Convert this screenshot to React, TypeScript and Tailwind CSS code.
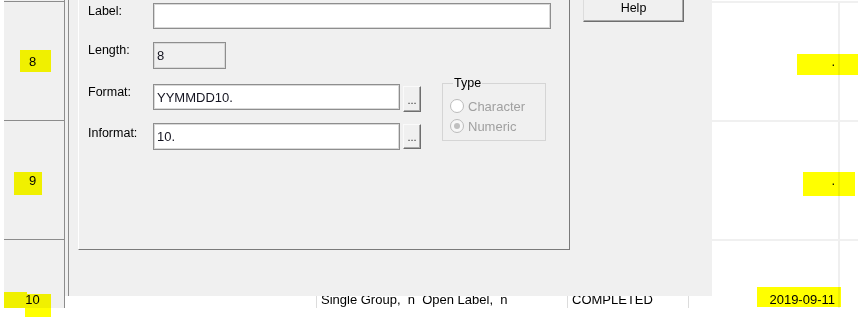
import React from "react";

function Field({ w, h, value, grey }: { w: string; h: string; value?: string; grey?: boolean }) {
  return (
    <div className={`${w} ${h} border border-[#8e8e8e]`}>
      <div
        className={`h-full border border-[#d9d9d9] ${grey ? "bg-[#f0f0f0]" : "bg-white"} flex items-center pl-[2px] text-[13px] leading-[15px] text-[#141420]`}
      >
        {value}
      </div>
    </div>
  );
}

function DotsButton({ extra }: { extra: string }) {
  return (
    <div
      className={`ml-[3px] w-[18px] ${extra} border-l border-t border-l-[#fafafa] border-t-[#fafafa] border-r border-b border-r-[#6e6e6e] border-b-[#6e6e6e] shadow-[inset_-1px_-1px_0_#a8a8a8] flex items-center justify-center pt-[2px] text-[11px] leading-none text-[#303030]`}
    >
      ...
    </div>
  );
}

function Row({ num, b, c, d }: { num: string; b?: React.ReactNode; c?: string; d?: string }) {
  return (
    <div className="flex h-[119px] shrink-0">
      <div className="w-[4px] bg-white" />
      <div className="w-[61px] bg-[#f0f0f0] border-t border-r border-[#8c8c8c] flex items-center justify-center pr-[3px] text-[13px] leading-[15px]">
        {num}
      </div>
      <div className="w-[252px] border-t-2 border-t-[#f0f0f0] border-r border-r-[#dcdcdc]" />
      <div className="w-[251px] border-t-2 border-t-[#f0f0f0] border-r border-r-[#dcdcdc] flex items-center pl-[4px] text-[13px] leading-[14px] whitespace-pre">
        {b}
      </div>
      <div className="w-[121px] border-t-2 border-t-[#f0f0f0] border-r border-r-[#dcdcdc] flex items-center pl-[4px] text-[13px] leading-[15px]">
        {c}
      </div>
      <div className="w-[151px] border-t-2 border-t-[#f0f0f0] border-r-2 border-r-[#efefef] flex items-center justify-end pr-[3px] text-[13px] leading-[15px]">
        {d}
      </div>
      <div className="flex-1 border-t-2 border-t-[#f0f0f0]" />
    </div>
  );
}

export default function App() {
  return (
    <div className="relative w-[858px] h-[318px] bg-white overflow-hidden font-['Liberation_Sans',Arial,sans-serif] text-black">
      {/* underlying table */}
      <div className="h-[308px] overflow-hidden flex flex-col">
        <div className="flex h-[1px] shrink-0">
          <div className="w-[4px]" />
          <div className="w-[61px] bg-[#f0f0f0] border-r border-[#8c8c8c]" />
        </div>
        <Row num="8" d="." />
        <Row num="9" d="." />
        <Row
          num="10"
          b={
            <div>
              <div>Allocation: N/A, Intervention</div>
              <div>{"Single Group,  n  Open Label,  n"}</div>
              <div>{"Assignment  (Masking: None (Open Label)"}</div>
            </div>
          }
          c="COMPLETED"
          d="2019-09-11"
        />
      </div>

      {/* dialog window over the table */}
      <div className="absolute left-[65px] top-0 w-[647px] h-[296px] bg-[#f0f0f0] pl-[3px]">
        <div className="h-full border-l border-[#8c8c8c] flex items-start">
          <div className="ml-[9px] w-[492px] h-[250px] border-l border-l-white border-r border-b border-r-[#7a7a7a] border-b-[#7a7a7a] pl-[9px] pt-[3px] flex flex-col text-[12.5px] leading-[15px]">
            <div className="flex h-[26px]">
              <div className="w-[65px] pt-[1px]">Label:</div>
              <Field w="w-[398px]" h="h-[26px]" />
            </div>
            <div className="flex h-[27px] mt-[13px]">
              <div className="w-[65px] pt-[1px]">Length:</div>
              <Field w="w-[73px]" h="h-[27px]" value="8" grey />
            </div>
            <div className="flex mt-[14px]">
              <div className="flex flex-col pt-[1px]">
                <div className="flex">
                  <div className="w-[65px] pt-[1px]">Format:</div>
                  <Field w="w-[247px]" h="h-[26px]" value="YYMMDD10." />
                  <DotsButton extra="mt-[2px] h-[26px]" />
                </div>
                <div className="flex mt-[11px]">
                  <div className="w-[65px] pt-[3px]">Informat:</div>
                  <Field w="w-[247px]" h="h-[27px]" value="10." />
                  <DotsButton extra="mt-[1px] h-[25px]" />
                </div>
              </div>
              <div className="relative ml-[21px] w-[104px] h-[58px] border border-[#d5d5d5] pl-[7px] pt-[12px]">
                <div className="absolute left-[10px] top-[-8px] px-[1px] bg-[#f0f0f0] text-[12.5px] leading-[15px] text-black">
                  Type
                </div>
                <div className="flex items-center h-[20px]">
                  <div className="w-[14px] h-[14px] rounded-full border border-[#bcbcbc] bg-white" />
                  <span className="ml-[4px] text-[13px] leading-[15px] text-[#a0a0a0]">Character</span>
                </div>
                <div className="flex items-center h-[20px]">
                  <div className="w-[14px] h-[14px] rounded-full border border-[#bcbcbc] bg-[#f7f7f7] flex items-center justify-center">
                    <div className="w-[6px] h-[6px] rounded-full bg-[#c0c0c0]" />
                  </div>
                  <span className="ml-[4px] text-[13px] leading-[15px] text-[#a0a0a0]">Numeric</span>
                </div>
              </div>
            </div>
          </div>
          <div className="ml-[13px] -mt-[4px] w-[101px] h-[26px] border-l border-t border-l-[#dcdcdc] border-t-[#dcdcdc] border-r border-b border-r-[#6e6e6e] border-b-[#6e6e6e] shadow-[inset_-1px_-1px_0_#a8a8a8] flex items-center justify-center pb-[1px] text-[12.5px] leading-[15px]">
            Help
          </div>
        </div>
      </div>

      {/* highlighter marks */}
      <div className="absolute left-[20px] top-[50px] w-[31px] h-[22px] bg-[#ffff00] mix-blend-multiply" />
      <div className="absolute left-[14px] top-[172px] w-[28px] h-[23px] bg-[#ffff00] mix-blend-multiply" />
      <div className="absolute left-[4px] top-[292px] w-[23px] h-[16px] bg-[#ffff00] mix-blend-multiply" />
      <div className="absolute left-[25px] top-[294px] w-[26px] h-[23px] bg-[#ffff00] mix-blend-multiply" />
      <div className="absolute left-[797px] top-[54px] w-[61px] h-[21px] bg-[#ffff00] mix-blend-multiply" />
      <div className="absolute left-[803px] top-[172px] w-[52px] h-[24px] bg-[#ffff00] mix-blend-multiply" />
      <div className="absolute left-[757px] top-[287px] w-[84px] h-[20px] bg-[#ffff00] mix-blend-multiply" />
    </div>
  );
}
